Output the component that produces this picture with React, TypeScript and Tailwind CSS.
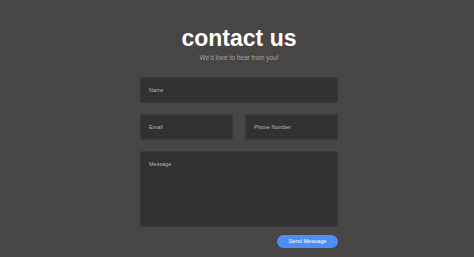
export default function App() {
  return (
    <div
      className="w-[474px] h-[257px] bg-[#474645] overflow-hidden"
      style={{ fontFamily: '"Liberation Sans", Arial, sans-serif' }}
    >
      <div className="w-[198px] ml-[140px] pt-[25px] flex flex-col">
        {/* Heading */}
        <h1 className="text-[23px] leading-[26px] font-bold text-white text-center">contact us</h1>
        <p className="mt-[3px] text-[6.5px] leading-[8px] text-[#a3a3a3] text-center">
          We'd love to hear from you!
        </p>

        {/* Form */}
        <div className="mt-[15px] flex flex-col gap-[11px]">
          <div className="h-[26px] bg-[#313131] border border-[#3a3a3a] rounded-[2px] flex items-center px-[8px]">
            <span className="text-[5.5px] text-[#b5b5b5]">Name</span>
          </div>
          <div className="flex gap-[12px]">
            <div className="w-[93px] h-[26px] bg-[#313131] border border-[#3a3a3a] rounded-[2px] flex items-center px-[8px]">
              <span className="text-[5.5px] text-[#b5b5b5]">Email</span>
            </div>
            <div className="flex-1 h-[26px] bg-[#313131] border border-[#3a3a3a] rounded-[2px] flex items-center px-[8px]">
              <span className="text-[5.5px] text-[#b5b5b5]">Phone Number</span>
            </div>
          </div>
          <div className="h-[76px] bg-[#313131] border border-[#3a3a3a] rounded-[2px] px-[8px] pt-[9px]">
            <span className="block text-[5.5px] leading-[7px] text-[#b5b5b5]">Message</span>
          </div>
        </div>

        <div className="mt-[8px] flex justify-end">
          <button className="w-[61px] h-[13px] rounded-full bg-[#4d8ef5] text-white text-[5.7px] leading-none flex items-center justify-center">
            Send Message
          </button>
        </div>
      </div>
    </div>
  );
}
